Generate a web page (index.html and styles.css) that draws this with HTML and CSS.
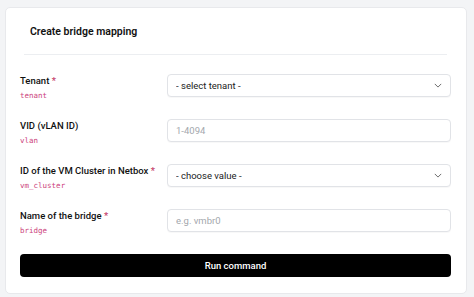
FILE: index.html
```html
<!DOCTYPE html>
<html lang="en">
<head>
    <meta charset="UTF-8">
    <meta name="viewport" content="width=device-width, initial-scale=1.0">
    <title>Create bridge mapping</title>
    <link rel="stylesheet" href="styles.css">
</head>
<body>
    <div class="card">
        <div class="card-header">
            <h2>Create bridge mapping</h2>
        </div>

        <form class="form">
            <div class="form-row">
                <div class="field-label">
                    <label>Tenant <span class="req">*</span></label>
                    <code>tenant</code>
                </div>
                <div class="select-wrap">
                    <select class="control">
                        <option>- select tenant -</option>
                    </select>
                    <svg class="chevron" viewBox="0 0 10 6" width="8" height="5"><path d="M1 1l4 4 4-4" fill="none" stroke="#666" stroke-width="1.2"/></svg>
                </div>
            </div>

            <div class="form-row">
                <div class="field-label">
                    <label>VID (vLAN ID)</label>
                    <code>vlan</code>
                </div>
                <input class="control" type="text" placeholder="1-4094">
            </div>

            <div class="form-row">
                <div class="field-label">
                    <label>ID of the VM Cluster in Netbox <span class="req">*</span></label>
                    <code>vm_cluster</code>
                </div>
                <div class="select-wrap">
                    <select class="control">
                        <option>- choose value -</option>
                    </select>
                    <svg class="chevron" viewBox="0 0 10 6" width="8" height="5"><path d="M1 1l4 4 4-4" fill="none" stroke="#666" stroke-width="1.2"/></svg>
                </div>
            </div>

            <div class="form-row">
                <div class="field-label">
                    <label>Name of the bridge <span class="req">*</span></label>
                    <code>bridge</code>
                </div>
                <input class="control" type="text" placeholder="e.g. vmbr0">
            </div>

            <button type="button" class="run-btn">Run command</button>
        </form>
    </div>
</body>
</html>
```

FILE: styles.css
```css
body {
    font-family: Roboto, "Noto Sans", sans-serif;
    margin: 0;
    padding: 7px 7px 4px 5px;
    background-color: #f3f4f6;
    color: #111;
}
.card {
    background: white;
    border: 1px solid #e8e9ec;
    border-radius: 5px;
    padding: 0 15px 16px 14px;
}
.card-header {
    margin: 0 4px;
    padding: 17px 6px 15px 6px;
    border-bottom: 1px solid #eceef1;
}
.card-header h2 {
    margin: 0;
    font-size: 10.5px;
    line-height: 14px;
    font-weight: 600;
}
.form {
    padding-top: 19px;
}
.form-row {
    display: grid;
    grid-template-columns: 147px 1fr;
    align-items: start;
    margin-bottom: 15px;
    height: 30px;
}
.field-label label {
    display: block;
    font-size: 9.5px;
    line-height: 12px;
    font-weight: 500;
    padding-top: 1px;
    white-space: nowrap;
}
.req {
    color: #c53c6a;
}
.field-label code {
    display: block;
    font-family: "DejaVu Sans Mono", monospace;
    font-size: 7.5px;
    line-height: 14px;
    margin-top: 2px;
    color: #cc3f7c;
}
.select-wrap {
    position: relative;
}
.control {
    box-sizing: border-box;
    width: 100%;
    height: 23px;
    margin: 0;
    padding: 0 8px;
    font-family: Roboto, "Noto Sans", sans-serif;
    font-size: 9.5px;
    color: #222;
    background: white;
    border: 1px solid #e1e3e7;
    border-radius: 4px;
    box-shadow: 0 1px 1px rgba(0,0,0,0.03);
    outline: none;
    appearance: none;
}
.control::placeholder {
    color: #a3a7ad;
}
.chevron {
    position: absolute;
    right: 9px;
    top: 9px;
}
.run-btn {
    display: block;
    width: 100%;
    height: 23px;
    margin-top: 0;
    background: #000;
    color: white;
    border: none;
    border-radius: 4px;
    font-family: Roboto, "Noto Sans", sans-serif;
    font-size: 9.5px;
    font-weight: 500;
    cursor: pointer;
}
```
